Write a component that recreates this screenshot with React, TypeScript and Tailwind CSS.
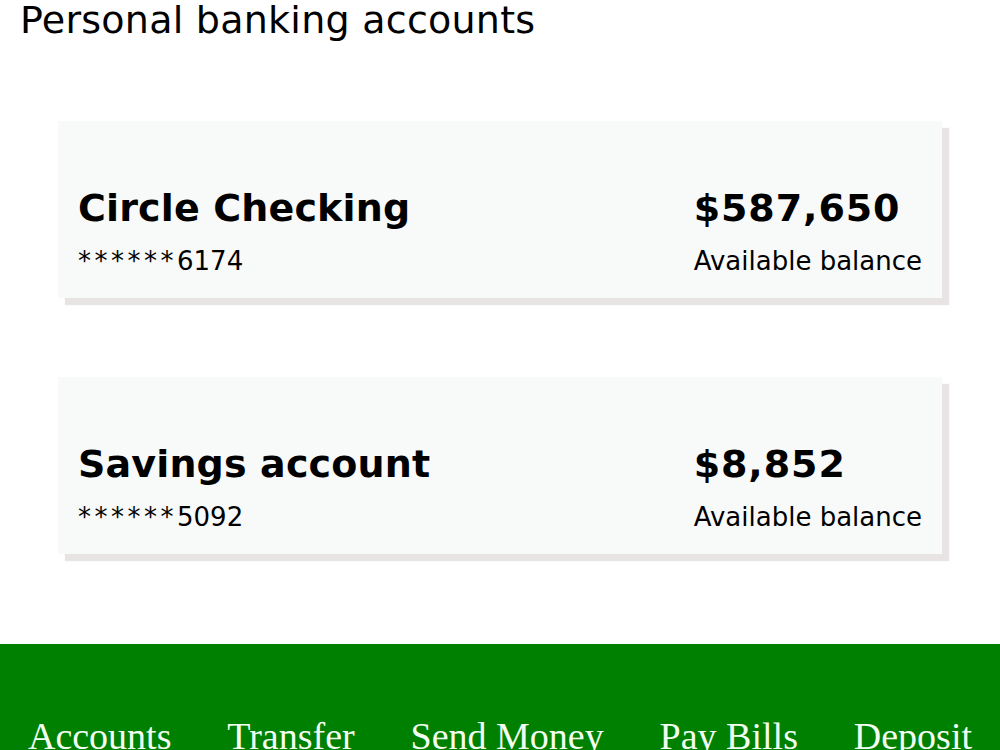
const accounts = [
  { name: "Circle Checking", number: "6174", balance: "$587,650" },
  { name: "Savings account", number: "5092", balance: "$8,852" },
];

const navItems = ["Accounts", "Transfer", "Send Money", "Pay Bills", "Deposit"];

export default function App() {
  return (
    <div className="min-h-screen bg-white text-black font-['DejaVu_Sans',sans-serif]">
      <h1 className="px-5 text-[38px] leading-[40px] font-normal tracking-[0.25px]">
        Personal banking accounts
      </h1>

      <main className="mx-[58px] mt-[81px] flex flex-col gap-[79px]">
        {accounts.map((acct) => (
          <div
            key={acct.name}
            className="flex items-start justify-between bg-[#f8f9f9] px-5 pt-[65px] pb-[22px] shadow-[7px_7px_1px_#e8e4e4]"
          >
            <div>
              <h2 className="text-[38px] font-bold leading-[44px] tracking-[0.15px]">{acct.name}</h2>
              <p className="mt-4 text-[26px] leading-[30px]">
                <span className="tracking-[3.5px]">******</span>
                {acct.number}
              </p>
            </div>
            <div className="-ml-1">
              <p className="text-[38px] font-bold leading-[44px] tracking-[0.9px]">{acct.balance}</p>
              <p className="mt-4 text-[26px] leading-[30px]">Available balance</p>
            </div>
          </div>
        ))}
      </main>

      <nav className="mt-[90px] bg-[#008000] pt-[64px] pb-4">
        <ul className="flex justify-around font-['Liberation_Serif',serif] text-[38px] text-[#f2fff2]">
          {navItems.map((item) => (
            <li key={item}>{item}</li>
          ))}
        </ul>
      </nav>
    </div>
  );
}
